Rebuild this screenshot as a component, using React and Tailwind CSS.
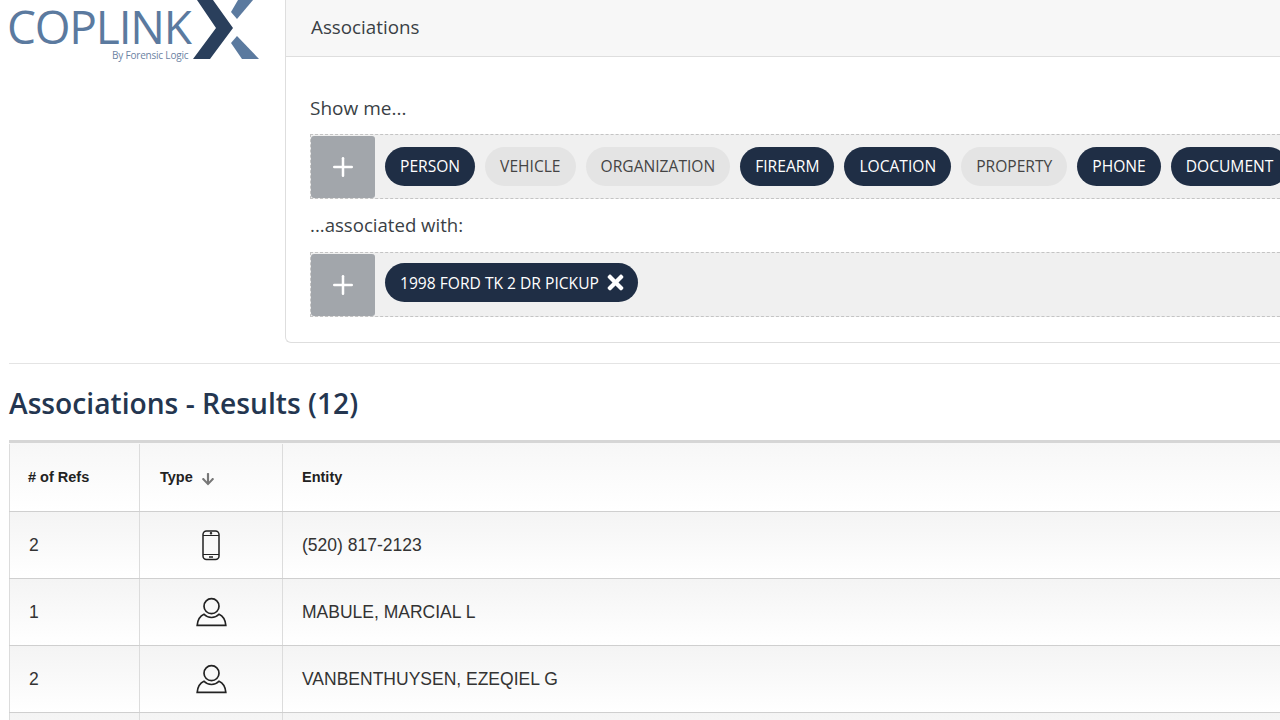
import { Plus } from 'lucide-react'
import { FaTimes, FaArrowDown } from 'react-icons/fa'

const sans = 'font-["Open_Sans","Noto_Sans",sans-serif]'

const tipos = [
  { label: 'PERSON', on: true },
  { label: 'VEHICLE', on: false },
  { label: 'ORGANIZATION', on: false },
  { label: 'FIREARM', on: true },
  { label: 'LOCATION', on: true },
  { label: 'PROPERTY', on: false },
  { label: 'PHONE', on: true },
  { label: 'DOCUMENT', on: true },
]

const filas = [
  { refs: 2, tipo: 'phone', entidad: '(520) 817-2123' },
  { refs: 1, tipo: 'person', entidad: 'MABULE, MARCIAL L' },
  { refs: 2, tipo: 'person', entidad: 'VANBENTHUYSEN, EZEQIEL G' },
]

function Logo() {
  return (
    <div className="relative w-[285px] h-[64px] shrink-0 overflow-hidden">
      <span className={`absolute left-[7px] top-[4px] text-[46px] leading-[44px] font-normal tracking-[-1.200px] text-[#5b7a9f] ${sans}`}>
        COPLINK
      </span>
      <span className={`absolute left-[112px] top-[48px] text-[10px] leading-[14px] tracking-[-0.2px] text-[#6c83a3] ${sans}`}>
        By Forensic Logic
      </span>
      <svg className="absolute left-[190px] top-0" width="72" height="64" viewBox="190 0 72 64">
        <polygon points="197,0 213,0 233,28 210,59 193,59 216,28" fill="#2a3f5c" />
        <polygon points="238,0 253,0 237,19 231,12" fill="#5b7a9f" />
        <polygon points="231,43 237,36 259,59 242,59" fill="#5b7a9f" />
      </svg>
    </div>
  )
}

function PhoneIcon() {
  return (
    <svg width="20" height="31" viewBox="0 0 20 31" fill="none" stroke="#222" strokeWidth="1.5">
      <rect x="2" y="1" width="16" height="28.5" rx="3.5" />
      <path d="M2 5.500h16M2 24.500h16" strokeWidth="1.2" />
      <path d="M8 27h4" strokeWidth="1.5" />
      <circle cx="10" cy="3.200" r="0.5" fill="#222" />
    </svg>
  )
}

function PersonIcon() {
  return (
    <svg width="32" height="30" viewBox="-1 0 32 30" fill="none" stroke="#222" strokeWidth="1.7">
      <circle cx="15.500" cy="9.200" r="7.500" />
      <path d="M1.200 28.300C1.700 23 4 19 8 17.300c2 2.200 4.600 3.200 7.500 3.200s5.500-1 7.500-3.200c4 1.700 6.300 5.700 6.800 11z" />
    </svg>
  )
}

function Pill({ label, on }) {
  return (
    <span className={`h-[39px] -mt-[1px] pt-[1px] shrink-0 flex items-center rounded-full px-[15px] text-[15.600px] ${on ? 'bg-[#1f2e45] text-white' : 'bg-[#e4e4e4] text-[#444]'}`}>
      {label}
    </span>
  )
}

function DropZone({ children }) {
  return (
    <div className="w-[1000px] h-[65px] flex items-center gap-[10px] bg-[#f0f0f0] border border-dashed border-[#c4c4c4] pr-2">
      <button className="w-[64px] h-[62px] mt-[1px] shrink-0 flex items-center justify-center bg-[#a2a6ab] rounded-[3px] text-white">
        <Plus size={30} strokeWidth={2} />
      </button>
      {children}
    </div>
  )
}

export default function App() {
  return (
    <div className="w-[1280px] h-[720px] overflow-hidden bg-white">
      <div className="flex items-start">
        <Logo />
        {/* Panel de búsqueda */}
        <div className={`w-[1000px] shrink-0 h-[343px] border-l border-b border-[#dedede] rounded-bl-md ${sans}`}>
          <div className="h-[57px] flex items-center pl-[25px] pb-[2px] bg-[#f7f7f7] border-b border-[#dedede] text-[18.800px] text-[#3a3f45]">
            Associations
          </div>
          <div className="pl-[24px]">
            <p className="mt-[37px] h-[28px] leading-[28px] text-[19px] text-[#3a3f45]">Show me...</p>
            <div className="mt-[12px]">
              <DropZone>
                {tipos.map((t) => <Pill key={t.label} label={t.label} on={t.on} />)}
              </DropZone>
            </div>
            <p className="mt-[12px] h-[28px] leading-[28px] text-[18.600px] text-[#3a3f45]">...associated with:</p>
            <div className="mt-[13px]">
              <DropZone>
                <span className="h-[39px] -mt-[4px] pt-[3px] shrink-0 flex items-center gap-[5px] rounded-full pl-[15px] pr-[11px] bg-[#1f2e45] text-white text-[15.600px]">
                  1998 FORD TK 2 DR PICKUP
                  <FaTimes size={23} className="-mt-[3px]" />
                </span>
              </DropZone>
            </div>
          </div>
        </div>
      </div>

      <div className="pl-[9px]">
        <div className="mt-[20px] border-t border-[#e4e4e4]" />
        <h2 className={`mt-[18px] h-[42px] leading-[42px] text-[28.200px] font-semibold text-[#243650] ${sans}`}>
          Associations - Results (12)
        </h2>

        {/* Tabla de resultados */}
        <div className='mt-[16px] w-[1271px] border-t-[3px] border-[#d6d6d6] font-["Liberation_Sans",Arial,sans-serif]'>
          <div className="grid grid-cols-[131px_143px_1fr] h-[69px] pt-[1px] bg-linear-to-b from-[#f7f7f7] to-white border-b border-[#cfcfcf] text-[14.500px] font-bold text-[#222]">
            <div className="border-l border-r border-[#dcdcdc] flex items-center pl-[18px]"># of Refs</div>
            <div className="border-r border-[#dcdcdc] flex items-center pl-5 gap-[8px]">
              Type <FaArrowDown size={14} className="text-[#777] mt-[2px]" />
            </div>
            <div className="flex items-center pl-[19px]">Entity</div>
          </div>
          {filas.map((f) => (
            <div key={f.entidad} className="grid grid-cols-[131px_143px_1fr] h-[67px] bg-linear-to-b from-[#f4f4f4] to-white border-b border-[#cfcfcf] text-[17.500px] text-[#333]">
              <div className="border-l border-r border-[#dcdcdc] flex items-center pl-[19px]">{f.refs}</div>
              <div className="border-r border-[#dcdcdc] flex items-center justify-center">
                {f.tipo === 'phone' ? <PhoneIcon /> : <PersonIcon />}
              </div>
              <div className="flex items-center pl-[19px]">{f.entidad}</div>
            </div>
          ))}
          <div className="grid grid-cols-[131px_143px_1fr] h-[67px] bg-linear-to-b from-[#f4f4f4] to-white">
            <div className="border-l border-r border-[#dcdcdc]" />
            <div className="border-r border-[#dcdcdc]" />
            <div />
          </div>
        </div>
      </div>
    </div>
  )
}
